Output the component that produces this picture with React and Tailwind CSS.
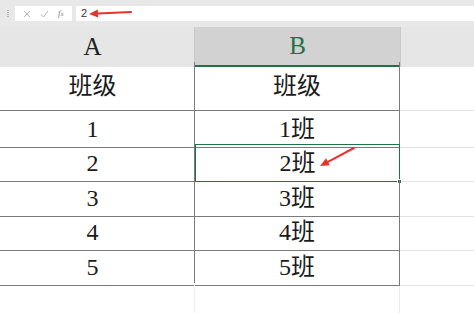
import React from 'react';

const rows = [
    { a: '班级', b: '班级', h: 'h-[49px]' },
    { a: '1', b: '1班', h: 'h-[34px]' },
    { a: '2', b: '2班', h: 'h-[35px]', selected: true },
    { a: '3', b: '3班', h: 'h-[34px]' },
    { a: '4', b: '4班', h: 'h-[35px]' },
    { a: '5', b: '5班', h: 'h-[34px]' },
];

const RedArrow = ({ className, x1, y1, x2, y2 }) => {
    // arrow pointing from (x1,y1) tail to (x2,y2) tip
    const ang = Math.atan2(y2 - y1, x2 - x1);
    const len = 9;
    const w = 4;
    const bx = x2 - len * Math.cos(ang);
    const by = y2 - len * Math.sin(ang);
    const px = -Math.sin(ang) * w;
    const py = Math.cos(ang) * w;
    return (
        <svg className={className} width="474" height="313" viewBox="0 0 474 313">
            <path d={`M${x1} ${y1} L${bx} ${by}`} stroke="#e8322b" strokeWidth="2" strokeLinecap="round" />
            <path d={`M${x2} ${y2} L${bx + px} ${by + py} L${bx - px} ${by - py} Z`} fill="#e8322b" />
        </svg>
    );
};

const App = () => {
    return (
        <div className="relative w-[474px] h-[313px] overflow-hidden bg-white" style={{ fontFamily: '"Liberation Serif", "Noto Sans CJK SC", serif' }}>
            {/* formula bar */}
            <div className="h-[27px] bg-[#e8e8e8] flex items-start pt-[6px]">
                <div className="w-[15px] flex justify-center pt-[4px]">
                    <div className="w-[2px] h-[7px] border-x border-dotted border-[#b0b0b0]" />
                </div>
                <div className="w-[57px] h-[15px] bg-white flex items-center justify-around px-[4px] text-[#a6a6a6]">
                    <svg width="8" height="8" viewBox="0 0 8 8"><path d="M1 1L7 7M7 1L1 7" stroke="#b5b5b5" strokeWidth="1" /></svg>
                    <svg width="9" height="8" viewBox="0 0 9 8"><path d="M1 4.5L3.5 7L8 1" stroke="#b5b5b5" strokeWidth="1" fill="none" /></svg>
                    <span className="text-[9px] italic text-[#808080]" style={{ fontFamily: '"Liberation Serif", serif' }}>f<span className="text-[7px]">x</span></span>
                </div>
                <div className="ml-[4px] flex-1 h-[15px] bg-white flex items-center pl-[5px]">
                    <span className="text-[11px] text-[#333]" style={{ fontFamily: '"Liberation Sans", sans-serif' }}>2</span>
                </div>
            </div>

            {/* column headers */}
            <div className="grid grid-cols-[195px_205px_1fr] h-[35px] border-b border-[#bdbdbd]">
                <div className="bg-[#e6e6e6] border-r border-[#c8c8c8] flex items-center justify-center pr-[9px] text-[25px] text-[#222]">A</div>
                <div className="bg-[#d2d2d2] border-b-2 border-[#217346] flex items-center justify-center text-[25px] text-[#217346]">B</div>
                <div className="bg-[#e6e6e6] border-l border-[#c8c8c8]" />
            </div>

            {/* cells */}
            {rows.map((r, i) => (
                <div key={i} className={`grid grid-cols-[195px_205px_1fr] ${r.h}`}>
                    <div className="border-b border-r border-[#7a7a7a] flex items-center justify-center pr-[9px] text-[24px] text-[#1a1a1a]">{r.a}</div>
                    <div className={`relative border-b border-r flex items-center justify-center text-[24px] text-[#1a1a1a] ${r.selected ? 'border-[#217346] border-t border-l -mt-px' : 'border-[#7a7a7a]'}`}>
                        {r.b}
                        {r.selected && <div className="absolute right-[-3px] bottom-[-3px] w-[5px] h-[5px] bg-[#217346] border border-white" />}
                    </div>
                    <div className="border-b border-[#e2e2e2]" />
                </div>
            ))}

            {/* empty area below */}
            <div className="grid grid-cols-[195px_205px_1fr] h-[40px]">
                <div className="border-r border-[#ececec]" />
                <div className="border-r border-[#ececec]" />
                <div />
            </div>

            <RedArrow className="absolute left-0 top-0 pointer-events-none" x1={131} y1={12} x2={89} y2={14} />
            <RedArrow className="absolute left-0 top-0 pointer-events-none" x1={354} y1={148} x2={320} y2={166} />
        </div>
    );
};

export default App;
